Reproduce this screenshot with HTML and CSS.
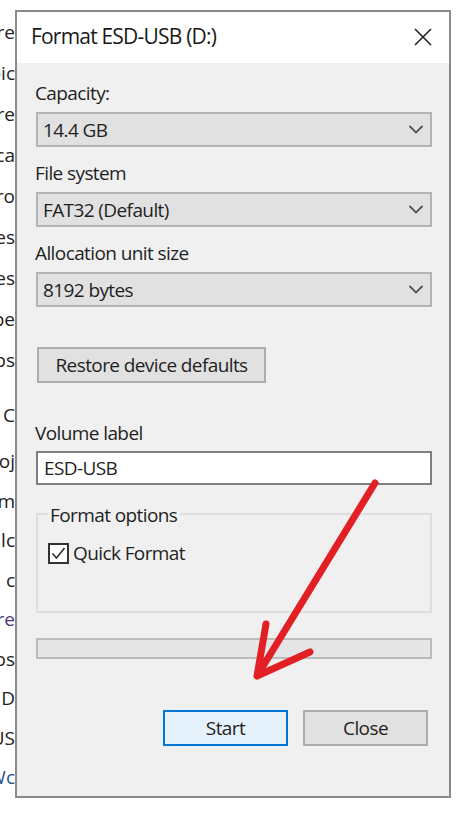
FILE: index.html
```html
<!DOCTYPE html>
<html lang="en">
<head>
<meta charset="utf-8">
<title>Format ESD-USB (D:)</title>
<link rel="stylesheet" href="styles.css">
</head>
<body>
<div class="screen">
  <div class="behind">
    <div class="group g1">
      <div class="frag">are</div>
      <div class="frag">topic</div>
      <div class="frag">are</div>
      <div class="frag">loca</div>
      <div class="frag">pro</div>
      <div class="frag">files</div>
      <div class="frag">ytes</div>
      <div class="frag">type</div>
      <div class="frag">ops</div>
    </div>
    <div class="frag fc">C</div>
    <div class="group g2">
      <div class="frag">roj</div>
      <div class="frag">m</div>
      <div class="frag">alc</div>
      <div class="frag">c</div>
      <div class="frag purple">re</div>
      <div class="frag">os</div>
      <div class="frag">D</div>
      <div class="frag">US</div>
      <div class="frag blue">Wc</div>
    </div>
  </div>

  <div class="dialog">
    <div class="titlebar">
      <span class="title">Format ESD-USB (D:)</span>
      <svg class="close-x" width="18" height="18" viewBox="0 0 18 18" aria-hidden="true">
        <path d="M1 1 L17 17 M17 1 L1 17" stroke="#222" stroke-width="1.6" fill="none"/>
      </svg>
    </div>
    <div class="content">
      <div class="label">Capacity:</div>
      <div class="select">
        <span>14.4 GB</span>
        <svg class="chev" width="16" height="9" viewBox="0 0 16 9" aria-hidden="true"><path d="M1.5 1 L8 7.5 L14.5 1" stroke="#555" stroke-width="1.8" fill="none"/></svg>
      </div>

      <div class="label">File system</div>
      <div class="select">
        <span>FAT32 (Default)</span>
        <svg class="chev" width="16" height="9" viewBox="0 0 16 9" aria-hidden="true"><path d="M1.5 1 L8 7.5 L14.5 1" stroke="#555" stroke-width="1.8" fill="none"/></svg>
      </div>

      <div class="label">Allocation unit size</div>
      <div class="select">
        <span>8192 bytes</span>
        <svg class="chev" width="16" height="9" viewBox="0 0 16 9" aria-hidden="true"><path d="M1.5 1 L8 7.5 L14.5 1" stroke="#555" stroke-width="1.8" fill="none"/></svg>
      </div>

      <div class="btn restore">Restore device defaults</div>

      <div class="label vol">Volume label</div>
      <div class="input">ESD-USB</div>

      <fieldset class="group-box">
        <legend class="legend">Format options</legend>
        <div class="check-row">
          <span class="checkbox">
            <svg width="17" height="17" viewBox="0 0 17 17" aria-hidden="true"><path d="M2.5 8.5 L6.5 13 L14.5 3" stroke="#333" stroke-width="1.7" fill="none"/></svg>
          </span>
          <span>Quick Format</span>
        </div>
      </fieldset>

      <div class="progress"></div>

      <div class="buttons">
        <div class="btn start">Start</div>
        <div class="btn close">Close</div>
      </div>
    </div>
  </div>
</div>

<svg class="arrow" width="474" height="814" viewBox="0 0 474 814" aria-hidden="true">
  <path d="M375 483 L257 676 M266 624 L257 676 L310 652" stroke="#e31f26" stroke-width="7" stroke-linecap="round" stroke-linejoin="round" fill="none"/>
</svg>
</body>
</html>
```

FILE: styles.css
```css
* { box-sizing: border-box; }

html, body {
  margin: 0;
  padding: 0;
  background: #ffffff;
}

body {
  width: 474px;
  height: 814px;
  overflow: hidden;
  position: relative;
  font-family: "Open Sans", "Noto Sans", "Liberation Sans", sans-serif;
  font-size: 19px;
  letter-spacing: -0.6px;
  color: #1f1f1f;
}

.screen {
  display: flex;
  align-items: flex-start;
  height: 814px;
}

/* window behind the dialog */
.behind {
  width: 15px;
  flex: none;
  overflow: hidden;
  padding-top: 12px;
  letter-spacing: 0;
}

.group { display: flex; flex-direction: column; }

.frag {
  display: flex;
  justify-content: flex-end;
  overflow: hidden;
  white-space: nowrap;
  color: #222;
}

.g1 .frag { height: 41px; line-height: 41px; }
.fc { height: 40px; line-height: 40px; margin-top: 14px; }
.g2 { margin-top: 7px; }
.g2 .frag { height: 39.5px; line-height: 39.5px; }
.purple { color: #4b3a7e; }
.blue { color: #2f4f8f; }

/* dialog */
.dialog {
  flex: none;
  margin-top: 10px;
  width: 436px;
  height: 788px;
  border: 2px solid #8a8a8a;
  background: #f0f0f0;
  display: flex;
  flex-direction: column;
}

.titlebar {
  height: 51px;
  flex: none;
  background: #ffffff;
  display: flex;
  align-items: center;
  justify-content: space-between;
  padding: 0 17px 3px 14px;
}

.title {
  font-size: 21px;
  line-height: 28px;
  letter-spacing: -0.8px;
  color: #1a1a1a;
}

.close-x { display: block; margin-top: 2px; }

.content {
  display: flex;
  flex-direction: column;
  padding: 18px 17px 0 19px;
}

.label {
  line-height: 24px;
  height: 24px;
  margin-bottom: 7px;
  margin-left: -1px;
}

.select {
  height: 35px;
  background: #e1e1e1;
  border: 2px solid #b3b3b3;
  display: flex;
  align-items: center;
  justify-content: space-between;
  padding: 0 6px 0 5px;
  line-height: 24px;
  margin-bottom: 14px;
}

.chev { display: block; }

.btn {
  height: 36px;
  display: flex;
  align-items: center;
  justify-content: center;
  background: #e1e1e1;
  border: 2px solid #adadad;
  line-height: 24px;
}

.restore {
  width: 229px;
  margin-left: 1px;
  margin-top: 26px;
}

.label.vol { margin-top: 38px; margin-bottom: 6px; }

.input {
  height: 34px;
  background: #ffffff;
  border: 2px solid #7f7f7f;
  display: flex;
  align-items: center;
  padding-left: 6px;
  line-height: 24px;
}

.group-box {
  margin: 16px 0 0 0;
  border: 2px solid #dedede;
  padding: 0 10px 46px 10px;
  min-width: 0;
}

.legend {
  padding: 2px 3px 0 2px;
  line-height: 24px;
}

.check-row {
  margin-top: 14px;
  height: 24px;
  display: flex;
  align-items: center;
  gap: 4px;
  line-height: 24px;
}

.checkbox {
  width: 21px;
  height: 21px;
  border: 2px solid #333333;
  background: #ffffff;
  display: flex;
  align-items: center;
  justify-content: center;
}

.checkbox svg { display: block; }

.progress {
  margin-top: 25px;
  height: 21px;
  background: #e6e6e6;
  border: 2px solid #bcbcbc;
}

.buttons {
  margin-top: 51px;
  display: flex;
  justify-content: flex-end;
  gap: 15px;
  padding-right: 4px;
}

.start, .close { width: 125px; }

.start {
  background: #e5f1fb;
  border-color: #0078d7;
}

.arrow {
  position: absolute;
  left: 0;
  top: 0;
  pointer-events: none;
}
```
